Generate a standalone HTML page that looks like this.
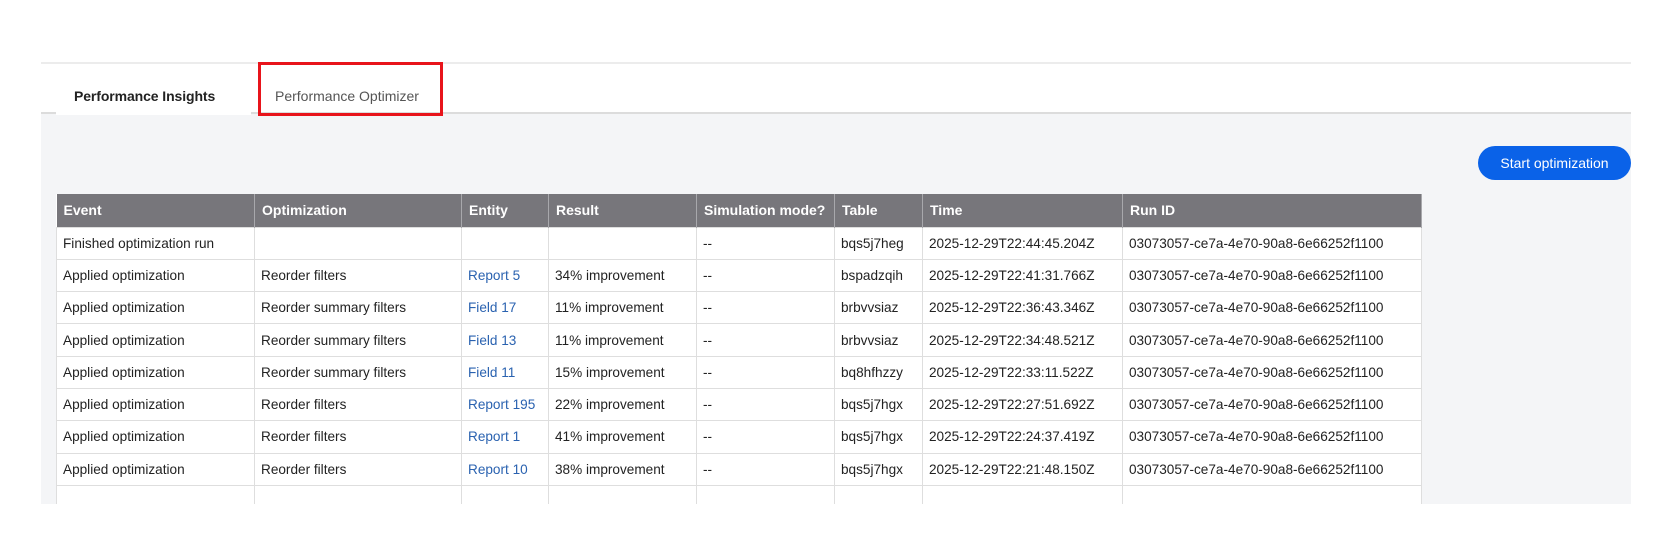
<!DOCTYPE html>
<html><head><meta charset="utf-8"><style>
*{margin:0;padding:0;box-sizing:border-box}
body{width:1679px;height:559px;background:#fff;position:relative;overflow:hidden;font-family:"Liberation Sans",sans-serif;color:#222}
.panel{position:absolute;left:41px;top:62px;width:1590px;height:442px;background:#f4f5f7;border-top:2px solid #ececec}
.tabs{position:absolute;left:0;top:0;width:100%;height:50px;background:#fff;border-bottom:2px solid #dcdcdc}
.t1{position:absolute;left:33px;top:24px;font-size:14px;font-weight:bold;color:#222;letter-spacing:-0.1px}
.t2{position:absolute;left:234px;top:24px;font-size:14px;color:#555}
.act{position:absolute;left:15px;top:48px;width:195px;height:3px;background:#fff}
.red{position:absolute;left:258px;top:62px;width:185px;height:54px;border:3px solid #e8141b}
.btn{position:absolute;left:1478px;top:146px;width:153px;height:34px;border-radius:17px;background:#0a62e8;color:#fff;font-size:14px;line-height:34px;text-align:center}
table{position:absolute;left:56px;top:194px;border-collapse:collapse;table-layout:fixed;width:1365px;background:#fff}
th{background:#77767b;color:#fff;font-weight:bold;font-size:14px;text-align:left;height:33px;padding:0 7px;border-right:1px solid #a8a8ac}
td{height:32.3px;font-size:13.6px;padding:0 6px;border:1px solid #dedede;white-space:nowrap;overflow:hidden}
td a{color:#2a62b0;text-decoration:none}
.clip{position:absolute;left:0;top:504px;width:1679px;height:55px;background:#fff}
</style></head><body>
<div class="panel">
<div class="tabs"><div class="t1">Performance Insights</div><div class="t2">Performance Optimizer</div><div class="act"></div></div>
</div>
<div class="red"></div>
<div class="btn">Start optimization</div>
<table>
<colgroup><col style="width:198px"><col style="width:207px"><col style="width:87px"><col style="width:148px"><col style="width:138px"><col style="width:88px"><col style="width:200px"><col style="width:299px"></colgroup>
<tr><th>Event</th><th>Optimization</th><th>Entity</th><th>Result</th><th>Simulation mode?</th><th>Table</th><th>Time</th><th>Run ID</th></tr>
<tr><td>Finished optimization run</td><td></td><td></td><td></td><td>--</td><td>bqs5j7heg</td><td>2025-12-29T22:44:45.204Z</td><td>03073057-ce7a-4e70-90a8-6e66252f1100</td></tr>
<tr><td>Applied optimization</td><td>Reorder filters</td><td><a>Report 5</a></td><td>34% improvement</td><td>--</td><td>bspadzqih</td><td>2025-12-29T22:41:31.766Z</td><td>03073057-ce7a-4e70-90a8-6e66252f1100</td></tr>
<tr><td>Applied optimization</td><td>Reorder summary filters</td><td><a>Field 17</a></td><td>11% improvement</td><td>--</td><td>brbvvsiaz</td><td>2025-12-29T22:36:43.346Z</td><td>03073057-ce7a-4e70-90a8-6e66252f1100</td></tr>
<tr><td>Applied optimization</td><td>Reorder summary filters</td><td><a>Field 13</a></td><td>11% improvement</td><td>--</td><td>brbvvsiaz</td><td>2025-12-29T22:34:48.521Z</td><td>03073057-ce7a-4e70-90a8-6e66252f1100</td></tr>
<tr><td>Applied optimization</td><td>Reorder summary filters</td><td><a>Field 11</a></td><td>15% improvement</td><td>--</td><td>bq8hfhzzy</td><td>2025-12-29T22:33:11.522Z</td><td>03073057-ce7a-4e70-90a8-6e66252f1100</td></tr>
<tr><td>Applied optimization</td><td>Reorder filters</td><td><a>Report 195</a></td><td>22% improvement</td><td>--</td><td>bqs5j7hgx</td><td>2025-12-29T22:27:51.692Z</td><td>03073057-ce7a-4e70-90a8-6e66252f1100</td></tr>
<tr><td>Applied optimization</td><td>Reorder filters</td><td><a>Report 1</a></td><td>41% improvement</td><td>--</td><td>bqs5j7hgx</td><td>2025-12-29T22:24:37.419Z</td><td>03073057-ce7a-4e70-90a8-6e66252f1100</td></tr>
<tr><td>Applied optimization</td><td>Reorder filters</td><td><a>Report 10</a></td><td>38% improvement</td><td>--</td><td>bqs5j7hgx</td><td>2025-12-29T22:21:48.150Z</td><td>03073057-ce7a-4e70-90a8-6e66252f1100</td></tr>
<tr><td style="height:8px"></td><td></td><td></td><td></td><td></td><td></td><td></td><td></td></tr>
<tr><td></td><td></td><td></td><td></td><td></td><td></td><td></td><td></td></tr>
</table>
<div class="clip"></div>
</body></html>
